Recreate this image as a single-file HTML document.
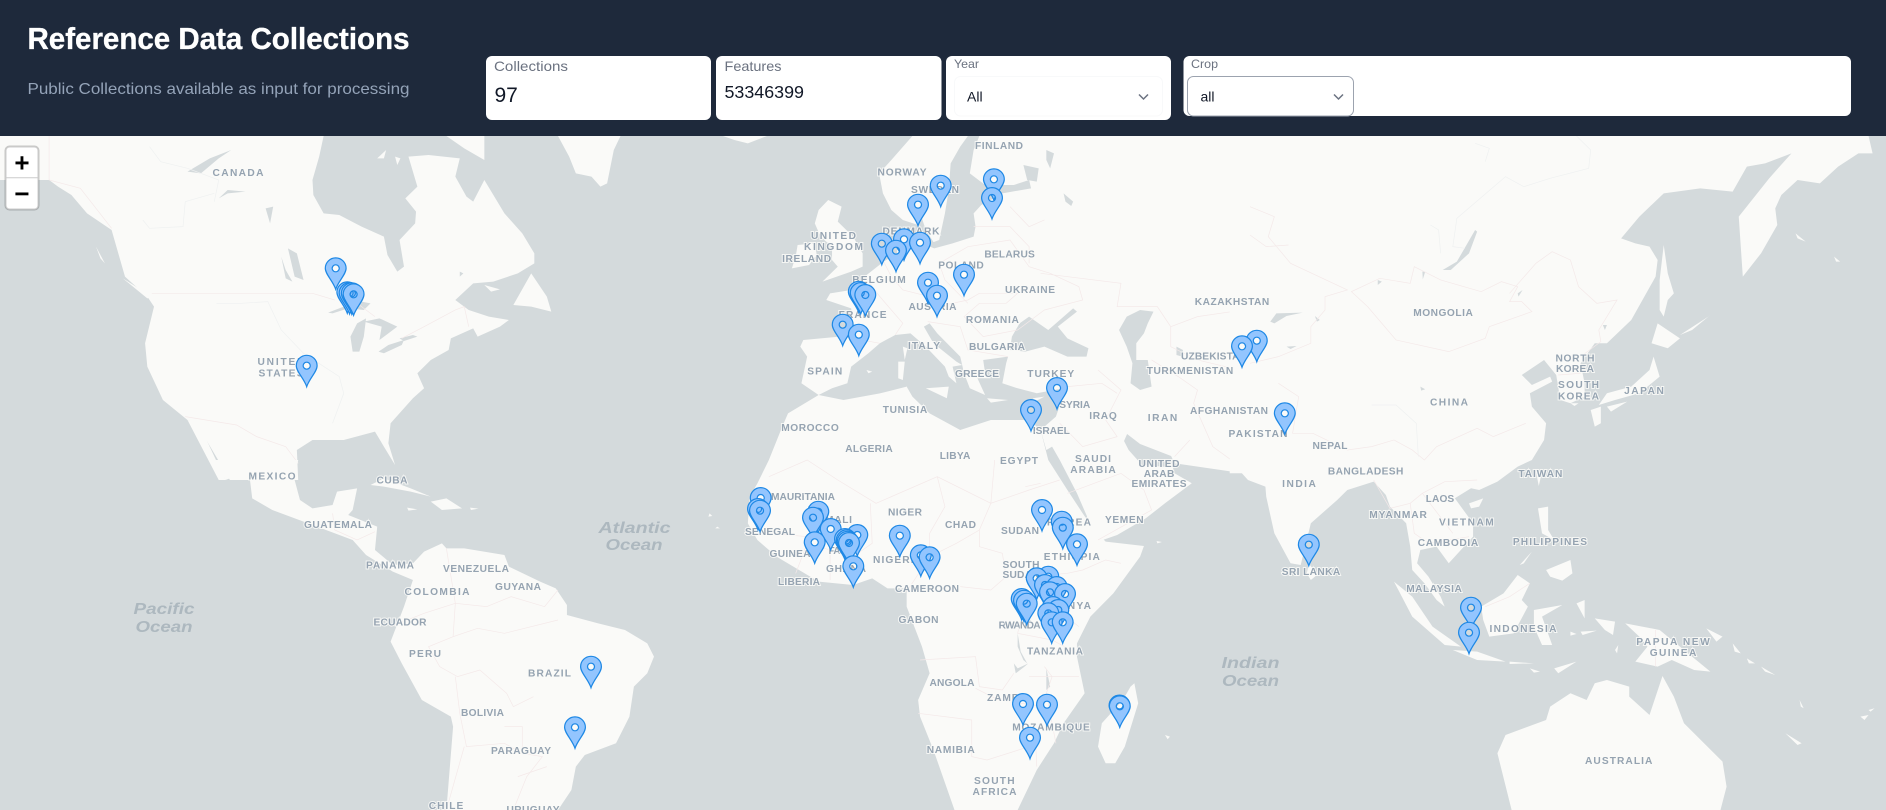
<!DOCTYPE html>
<html lang="en"><head><meta charset="utf-8"><title>Reference Data Collections</title>
<style>
html,body{margin:0;padding:0;width:1886px;height:810px;overflow:hidden;background:#d4dadc}
svg{display:block;font-family:"Liberation Sans",sans-serif}
.land{fill:#fafaf8}.w{fill:#d4dadc}
.b{fill:none;stroke:#f4e9e9;stroke-width:.7;vector-effect:non-scaling-stroke}
.r{fill:none;stroke:#eff1f1;stroke-width:.7;vector-effect:non-scaling-stroke}
.l{font-size:10.2px;fill:#95a3b1;text-anchor:middle;paint-order:stroke;stroke:#fafaf8;stroke-width:2px;stroke-opacity:.85;font-weight:700}
.o{font-size:15.5px;font-style:italic;font-weight:700;fill:#adb8bf;text-anchor:middle}
#p{fill:#93c5fe;stroke:#1e88e5;stroke-width:1.2;fill-rule:evenodd}
</style></head><body>
<svg width="1886" height="810" viewBox="0 0 1886 810" xmlns="http://www.w3.org/2000/svg">
<rect width="1886" height="810" fill="#d4dadc"/>
<defs><path id="p" d="M0 0C-2.5-8-10.4-15-10.4-21A10.4 10.4 0 1 1 10.4-21C10.4-15 2.5-8 0 0ZM0-24.5a3.5 3.5 0 1 0 .01 0Z"/></defs>

<!-- North America -->
<g transform="translate(0 130) scale(.4464 .3333)">
<path class="land" d="M0 18L725 18 715 80 700 150 702 195 725 250 760 255 810 290 860 320 868 375 890 425 905 410 895 330 930 280 932 245 908 205 935 170 915 80 960 75 1030 85 1020 140 1045 200 1060 215 1085 150 1130 250 1170 310 1197 370 1197 400 1160 430 1105 455 1060 460 1020 510 1030 520 1050 540 1095 560 1140 570 1120 590 1070 620 1060 595 1010 625 1005 660 965 690 935 730 950 775 925 805 875 880 870 940 885 1005 860 950 840 905 770 930 700 930 665 960 668 1050 515 1050 440 880 420 870 365 810 330 710 325 640 345 530 330 500 280 440 250 300 195 250 160 195 130 170 110 150 0 150Z"/>
<path class="land" d="M1250 18L1390 18 1375 60 1360 160 1345 170 1325 140 1290 130 1275 80ZM1000 18L1085 18 1085 90 1040 55ZM1150 525L1190 430 1225 500 1235 545 1190 530ZM1085 465L1120 478 1100 485ZM845 85L865 60 860 85ZM885 80L897 85 890 105ZM215 350L235 400 225 385ZM275 445L340 500 330 505ZM420 870L445 880 505 1050 490 1050Z"/>
<path class="w" d="M735 548L770 530 810 515 830 520 815 540 780 535 745 550ZM785 620L800 580 820 565 815 620 805 665 790 665ZM815 575L850 565 890 590 870 610 850 630 855 590ZM848 665L870 645 905 630 900 645 860 670ZM895 625L925 615 935 620 905 633ZM420 125L470 85 518 60 490 85 450 130ZM490 205L510 180 550 185 510 190ZM595 235L612 230 605 280ZM645 355L665 370 680 450 660 440ZM630 380L640 420 655 455 640 445ZM1030 425L1038 430 1030 440Z"/>
<path class="b" d="M340 490L700 490 750 510M110 18L110 150 180 175 250 295M415 860L530 885 575 920 640 950 668 1000M900 625L950 590 1020 540 1040 530 1050 590M790 510L840 560"/>
<path class="r" d="M320 270L335 295 410 290 415 215 480 190M485 520L540 520 600 515 630 600 680 670 760 740 770 790 745 880M335 50L360 95 420 115 490 150 480 215"/>
</g>
<!-- Central and South America -->
<g transform="translate(0 460) scale(.4464 .3333)">
<path class="land" d="M515 0L668 0 660 60 672 120 700 145 745 135 755 95 800 85 790 150 780 165 845 200 840 270 880 315 925 310 950 275 990 250 1000 265 1040 265 1130 285 1140 320 1210 365 1245 385 1270 435 1270 465 1340 490 1400 510 1450 550 1465 590 1450 640 1420 680 1410 770 1380 850 1310 885 1290 920 1280 990 1250 1050 1000 1050 1015 800 1010 770 945 720 900 610 875 545 905 440 925 360 880 335 820 285 790 240 740 215 680 185 610 150 565 115 560 60Z"/>
<path class="land" d="M830 75L860 55 920 85 965 110 920 95 860 80ZM965 125L1000 115 1035 145 990 150ZM480 0L495 0 515 55 505 60ZM912 143L935 148 915 152ZM1053 143L1072 146 1055 150Z"/>
<path class="b" d="M745 160L750 210 800 240M800 240L840 215M1000 265L1020 430 1015 530M1015 530L960 560 985 620 1025 650 1075 630 1135 700 1150 740 1195 710M1020 650L1030 760M1020 430L1090 440 1145 410 1220 440 1250 390M1015 530L1070 505 1130 520 1250 480M1030 760L1045 860 1130 850 1170 880 1215 890 1180 950 1165 1000 1150 1050M1040 860L1000 1050M1130 800L1170 800 1170 880M1160 950L1225 920M875 500L950 460 1020 430"/>
</g>
<!-- Europe, Middle East -->
<g transform="translate(700 130) scale(.3827 .3333)">
<path class="land" d="M555 18L1568 18 1568 1040 1390 1025 1240 1000 1231 978 1150 942 1116 912 1108 933 1120 960 1155 1005 1218 1011 1231 995 1240 1030 1285 1060 1215 1120 1165 1165 1090 1215 1040 1235 985 1090 940 990 920 950 905 960 890 900 930 860 945 810 950 775 880 790 830 775 790 760 800 700 805 680 740 690 745 730 760 745 725 745 745 795 705 775 690 730 680 680 620 610 600 580 585 590 610 640 670 695 685 705 660 710 670 760 650 740 640 710 590 650 550 610 510 615 470 640 440 670 395 710 385 760 345 775 310 795 265 760 280 680 262 650 270 630 365 620 400 590 395 535 330 510 340 490 395 480 430 440 480 395 515 370 515 310 545 292 590 340 615 345 590 300 580 265 570 285 530 270 500 240 478 190 468 130 500 90Z"/>
<path class="land" d="M310 240L335 210 370 230 360 275 400 320 425 370 425 410 395 425 320 455 360 410 345 390 345 350 315 320 300 280ZM255 345L300 340 305 375 285 405 240 415 250 380ZM60 18L175 18 125 40 90 30ZM590 775L650 770 645 805ZM750 805L805 810 760 818ZM870 805L900 800 875 815ZM530 650L542 655 535 690ZM518 695L535 695 530 750 518 745ZM435 720L450 725 440 730Z"/>
<path class="w" d="M810 660L815 620 835 580 860 560 885 580 910 600 930 580 975 535 985 545 935 590 960 625 1015 655 1010 680 960 680 900 650 850 665ZM1095 600L1115 560 1150 540 1185 545 1170 580 1160 610 1140 640 1140 690 1170 690 1180 770 1150 780 1125 760 1130 700 1115 650ZM700 18L730 18 715 60 705 130 745 165 820 165 860 150 865 175 790 190 760 210 735 225 715 250 720 290 715 320 660 340 612 355 590 345 625 330 640 250 650 180 655 100 680 50ZM845 105L885 115 880 155 855 150ZM950 190L975 215 970 228 955 215ZM1245 650L1262 660 1260 680 1245 675ZM1490 585L1510 550 1560 550 1510 560 1500 585ZM905 60L925 70 915 115 905 90Z"/>
<path class="b" d="M365 620L400 625 470 640M510 615L530 580 500 540 470 500 430 440M480 395L500 440 530 480 600 500 620 530 700 510 730 490 830 490 800 520 730 520 690 560 740 620 830 600M595 575L680 590 700 660 805 680M700 520L640 450 625 400 700 350 810 330 860 410 915 430 990 470 1000 510 900 540 830 600M715 290L810 290 860 350 860 400M810 230L860 290 900 270M890 430L1100 460 1090 530 1195 530 1230 590 1300 560 1420 540 1500 440 1568 430M1230 590L1230 650 1300 690 1410 720 1440 690 1530 690M1180 690L1250 740 1300 780 1290 820 1340 950 1400 1000M1280 930L1240 980M1040 720L1100 780 1060 870 1090 920 1000 950 940 880M960 770L1050 760 1090 790M310 795L260 990 180 1020M370 810L355 960 470 1020M540 770L540 860 600 950 620 1020M760 880L770 1020M890 1020L770 1020"/>
</g>
<!-- Africa, Arabia -->
<g transform="translate(700 460) scale(.3827 .3333)">
<path class="land" d="M310 -195L375 -180 470 -200 540 -220 555 -190 600 -140 680 -90 760 -120 860 -120 890 -90 910 0 960 90 1000 160 1030 210 1060 245 1160 258 1150 290 1080 400 1020 470 985 550 985 590 1005 700 950 790 925 850 880 930 830 1050 665 1050 610 870 575 770 570 720 600 640 580 560 540 440 540 385 490 385 450 355 400 375 310 365 200 290 150 240 125 190 130 110 150 70 180 0 215 -100 230 -140Z"/>
<path class="land" d="M1125 680L1135 670 1145 730 1110 860 1085 910 1060 910 1040 860 1050 790 1105 720ZM1215 825L1228 830 1222 838ZM25 160L32 168 22 170ZM45 200L52 205 40 205ZM1193 243L1207 246 1195 250Z"/>
<path class="w" d="M820 610L830 625 858 610 848 620 825 640ZM830 520L838 575 855 610 845 600 830 560ZM905 625L915 680 905 690ZM855 470L880 500 870 505Z"/>
<path class="b" d="M180 50L280 0 360 60 460 130 620 50 760 130 770 0M620 50L640 140 600 220 600 290 670 250 730 210 760 130 860 90 940 60M730 210L730 260 790 280 800 350 760 390 680 380M600 290L540 395M445 130L450 250 400 290 340 270 280 250M340 270L340 360M280 250L250 340M180 220L280 230M800 350L860 350 960 340 1000 330 1060 300 1100 310M860 350L880 400 990 500M850 420L830 520 920 540 985 580M860 650L920 650 990 650M900 620L920 650 905 700 930 850M575 600L720 590 730 680 790 690 820 640M570 760L710 780 710 890 750 900 860 860M720 685L780 720 900 740M875 800L880 920M1040 240L1180 150 1160 90 1100 40 1030 70M850 80L890 70M960 100L1030 70"/>
</g>
<!-- East Asia -->
<g transform="translate(1250 130) scale(.4056 .3333)">
<path class="land" d="M-50 18L1525 18 1535 70 1500 70 1450 110 1405 160 1350 150 1310 195 1295 235 1300 285 1260 370 1215 440 1205 260 1280 145 1335 70 1270 100 1225 110 1190 185 1110 175 1020 190 960 260 915 325 950 340 985 350 1005 390 1000 440 940 570 880 640 850 640 815 700 825 760 825 800 790 820 765 810 755 735 725 690 670 735 695 765 740 740 745 755 690 790 695 830 730 880 725 930 695 990 660 1010 610 1055 565 1080 545 1075 505 1105 550 1180 550 1220 490 1300 460 1250 420 1260 412 1300 440 1340 470 1400 480 1430 460 1410 430 1360 400 1320 395 1250 385 1180 345 1130 335 1095 305 1055 240 1080 215 1110 150 1180 125 1305 100 1300 60 1210 40 1100 38 1070 -5 1050 -20 1030 -50 1030Z"/>
<path class="land" d="M1020 345L1030 430 1045 490 1030 510 1020 560 1010 540 1010 450ZM1005 580L1060 625 1030 655 990 640ZM995 680L1010 740 960 790 900 810 860 825 880 790 940 770 985 720ZM840 840L865 830 865 880 850 890ZM880 830L930 815 890 845ZM1060 615L1130 560 1150 540 1090 600ZM1345 310L1370 335 1350 325ZM1440 380L1455 395 1445 395ZM790 820L810 820 800 828Z"/>
<path class="w" d="M475 420L510 395 555 300 560 305 540 370 495 420ZM50 575L65 550 130 548 90 558 60 580ZM90 650L115 648 100 657ZM160 558L172 570 165 575ZM420 770L432 778 422 782ZM660 490L672 480 662 500ZM870 585L880 585 875 600ZM315 450L325 455 315 465ZM425 425L432 425 426 448Z"/>
<path class="b" d="M290 530L360 630 490 665 580 625 590 590 695 545 670 515 640 515 660 470 620 455 570 485 470 450 405 410 395 460 320 445 250 485 290 530M640 490L705 400 745 365 790 390 810 470 855 520 905 510 860 600 865 635 815 680M0 230L60 260 45 320 100 400 240 480 185 500 185 540 150 590 150 640 70 680 0 700M70 760L120 800 105 910 155 910 240 960 300 950 355 930 400 960 430 990 460 950 560 895 600 920 680 880M0 315L40 350 95 345M760 735L815 730"/>
<path class="r" d="M300 825L360 825 410 880 415 980M445 285L465 300 470 370M555 40L590 55 580 95M805 18L840 60 835 115 740 145 675 170 630 140 510 265 500 350 530 355"/>
</g>
<!-- SE Asia, Oceania -->
<g transform="translate(1250 460) scale(.4056 .3333)">
<path class="land" d="M145 310L165 345 150 360 140 340ZM705 35L720 35 712 78ZM540 130L575 115 565 140 545 145ZM710 145L735 140 735 210 750 240 720 220ZM730 330L790 300 795 340 770 362 740 350ZM665 315L695 275 675 310ZM570 440L625 400 660 345 690 370 670 420 685 440 650 520 590 530 575 480ZM355 365L400 410 450 500 520 560 480 555 400 470ZM500 570L560 575 630 605 560 600ZM700 450L770 435 720 470 745 555 720 555 700 500ZM640 605L700 610 640 612ZM690 625L715 635 700 638ZM750 625L805 605 760 640ZM850 475L900 485 895 525 875 510ZM805 430L825 420 825 475ZM790 515L805 522 790 527ZM815 515L855 512 820 525ZM925 490L1010 510 1090 590 1135 635 1095 630 1040 600 1005 620 950 605 980 560 960 530ZM1125 505L1165 530 1150 545ZM1190 550L1210 580 1195 575ZM1225 595L1245 610 1230 610ZM1260 620L1295 645 1270 635ZM645 1050L610 880 630 825 730 780 740 740 790 700 830 720 850 670 880 660 935 680 935 710 985 765 1017 648 1045 710 1070 790 1165 905 1175 980 1160 1050ZM1320 820L1360 850 1350 855ZM1505 770L1525 765 1515 780ZM1525 750L1540 745 1530 755ZM1355 720L1365 745 1358 740ZM900 570L908 555 905 580Z"/>
<path class="b" d="M305 60L345 145 395 130 425 100 480 65 560 60M395 130L405 220 440 250M425 100L500 220M440 250L540 230M580 440L640 410 690 370M1000 510L1000 620"/>
</g>

<!-- Header -->
<rect width="1886" height="136" fill="#1e293b"/>
<text x="27.5" y="49" font-size="31" font-weight="700" fill="#fff" stroke="#fff" stroke-width=".35" textLength="382" lengthAdjust="spacingAndGlyphs">Reference Data Collections</text>
<text x="27.5" y="94" font-size="16" fill="#94a3b8" textLength="382" lengthAdjust="spacingAndGlyphs">Public Collections available as input for processing</text>
<rect x="486" y="56" width="225" height="64" rx="6" fill="#fff"/>
<rect x="716" y="56" width="225.5" height="64" rx="6" fill="#fff"/>
<rect x="946" y="56" width="225" height="64" rx="6" fill="#fff"/>
<rect x="1183.5" y="56" width="667.5" height="60" rx="6" fill="#fff"/>
<text x="494" y="71" font-size="14" fill="#6b7280" textLength="74" lengthAdjust="spacingAndGlyphs">Collections</text>
<text x="494.5" y="102" font-size="21" fill="#111827">97</text>
<text x="724.5" y="71" font-size="14" fill="#6b7280" textLength="57" lengthAdjust="spacingAndGlyphs">Features</text>
<text x="724.5" y="98" font-size="17.5" fill="#111827" textLength="79.5" lengthAdjust="spacingAndGlyphs">53346399</text>
<text x="954" y="68" font-size="12" fill="#6b7280" textLength="25" lengthAdjust="spacingAndGlyphs">Year</text>
<rect x="954.5" y="76.5" width="208" height="39.5" rx="6" fill="#fff" stroke="#f8f9fa"/>
<text x="967" y="101.5" font-size="14" fill="#111827">All</text>
<path d="M1139 94.5l4.5 4.5 4.5-4.5" fill="none" stroke="#6b7280" stroke-width="1.5"/>
<text x="1191" y="68" font-size="12" fill="#6b7280" textLength="27" lengthAdjust="spacingAndGlyphs">Crop</text>
<rect x="1187.5" y="76.5" width="166" height="39.5" rx="6" fill="#fff" stroke="#9ca3af"/>
<text x="1200.5" y="101.5" font-size="14" fill="#111827">all</text>
<path d="M1334 94.5l4.5 4.5 4.5-4.5" fill="none" stroke="#6b7280" stroke-width="1.5"/>

<!-- Labels -->
<g>
<text class="l" x="238" y="176" textLength="51">CANADA</text>
<text class="l" x="281" y="365" textLength="47">UNITED</text>
<text class="l" x="281" y="376.5" textLength="45">STATES</text>
<text class="l" x="272" y="479.5" textLength="47">MEXICO</text>
<text class="l" x="392" y="483.5" textLength="31">CUBA</text>
<text class="l" x="338" y="528" textLength="68">GUATEMALA</text>
<text class="l" x="390" y="568.5" textLength="48">PANAMA</text>
<text class="l" x="476" y="572" textLength="66">VENEZUELA</text>
<text class="l" x="437" y="595" textLength="65">COLOMBIA</text>
<text class="l" x="518" y="590" textLength="46">GUYANA</text>
<text class="l" x="400" y="625.5" textLength="53">ECUADOR</text>
<text class="l" x="425" y="657" textLength="32">PERU</text>
<text class="l" x="549.5" y="676.5" textLength="43">BRAZIL</text>
<text class="l" x="482.5" y="716" textLength="43">BOLIVIA</text>
<text class="l" x="521" y="754" textLength="60">PARAGUAY</text>
<text class="l" x="446" y="809" textLength="34.5">CHILE</text>
<text class="l" x="533" y="813" textLength="53">URUGUAY</text>
<text class="l" x="999" y="149" textLength="48">FINLAND</text>
<text class="l" x="902" y="175.5" textLength="49">NORWAY</text>
<text class="l" x="935" y="193" textLength="48">SWEDEN</text>
<text class="l" x="911" y="234.5" textLength="57">DENMARK</text>
<text class="l" x="833.5" y="239" textLength="45">UNITED</text>
<text class="l" x="833.5" y="250" textLength="59">KINGDOM</text>
<text class="l" x="806.6" y="262" textLength="49">IRELAND</text>
<text class="l" x="1009.6" y="257.5" textLength="50.5">BELARUS</text>
<text class="l" x="961" y="268.5" textLength="45.5">POLAND</text>
<text class="l" x="879" y="283" textLength="53.5">BELGIUM</text>
<text class="l" x="1030" y="293" textLength="50">UKRAINE</text>
<text class="l" x="1232" y="305" textLength="74.5">KAZAKHSTAN</text>
<text class="l" x="932.5" y="310" textLength="48">AUSTRIA</text>
<text class="l" x="862.6" y="318" textLength="48">FRANCE</text>
<text class="l" x="992.4" y="323" textLength="53">ROMANIA</text>
<text class="l" x="924" y="349" textLength="32">ITALY</text>
<text class="l" x="997" y="350" textLength="56">BULGARIA</text>
<text class="l" x="1214" y="359.5" textLength="66">UZBEKISTAN</text>
<text class="l" x="1190" y="374" textLength="86.5">TURKMENISTAN</text>
<text class="l" x="824.7" y="374.5" textLength="35">SPAIN</text>
<text class="l" x="1050.7" y="377" textLength="47">TURKEY</text>
<text class="l" x="977" y="377" textLength="44">GREECE</text>
<text class="l" x="1074.7" y="408" textLength="31">SYRIA</text>
<text class="l" x="1103" y="419" textLength="27.5">IRAQ</text>
<text class="l" x="1162.5" y="421" textLength="29.5">IRAN</text>
<text class="l" x="1229" y="414" textLength="78">AFGHANISTAN</text>
<text class="l" x="1258" y="437" textLength="59">PAKISTAN</text>
<text class="l" x="905" y="413" textLength="44.5">TUNISIA</text>
<text class="l" x="810" y="431" textLength="57.5">MOROCCO</text>
<text class="l" x="1051.4" y="434" textLength="37">ISRAEL</text>
<text class="l" x="869" y="452" textLength="47.5">ALGERIA</text>
<text class="l" x="955" y="459" textLength="30.6">LIBYA</text>
<text class="l" x="1019" y="464" textLength="38">EGYPT</text>
<text class="l" x="1093" y="462" textLength="36">SAUDI</text>
<text class="l" x="1093" y="473" textLength="45.5">ARABIA</text>
<text class="l" x="1159" y="467" textLength="41">UNITED</text>
<text class="l" x="1159" y="477" textLength="30.6">ARAB</text>
<text class="l" x="1159" y="487" textLength="55">EMIRATES</text>
<text class="l" x="1299" y="487" textLength="33.7">INDIA</text>
<text class="l" x="803" y="500" textLength="64">MAURITANIA</text>
<text class="l" x="838.5" y="523" textLength="27">MALI</text>
<text class="l" x="770" y="535" textLength="50">SENEGAL</text>
<text class="l" x="905" y="515.5" textLength="34">NIGER</text>
<text class="l" x="960.5" y="528" textLength="31">CHAD</text>
<text class="l" x="1020" y="534" textLength="38">SUDAN</text>
<text class="l" x="1065" y="525.5" textLength="52">ERITREA</text>
<text class="l" x="1124.3" y="523" textLength="38.7">YEMEN</text>
<text class="l" x="790" y="557" textLength="41">GUINEA</text>
<text class="l" x="841" y="554" textLength="25">FASO</text>
<text class="l" x="897.5" y="563" textLength="49">NIGERIA</text>
<text class="l" x="846" y="572" textLength="40">GHANA</text>
<text class="l" x="1071.8" y="560" textLength="56">ETHIOPIA</text>
<text class="l" x="1021" y="568" textLength="37">SOUTH</text>
<text class="l" x="1021" y="578" textLength="37">SUDAN</text>
<text class="l" x="799" y="585" textLength="42">LIBERIA</text>
<text class="l" x="927" y="592" textLength="64">CAMEROON</text>
<text class="l" x="1071" y="609" textLength="40">KENYA</text>
<text class="l" x="918.5" y="623" textLength="40">GABON</text>
<text class="l" x="1019.6" y="628.5" textLength="42">RWANDA</text>
<text class="l" x="1055" y="654.5" textLength="56">TANZANIA</text>
<text class="l" x="952" y="686" textLength="45">ANGOLA</text>
<text class="l" x="1009" y="701" textLength="44">ZAMBIA</text>
<text class="l" x="1051" y="730.5" textLength="77.6">MOZAMBIQUE</text>
<text class="l" x="950.7" y="753" textLength="48">NAMIBIA</text>
<text class="l" x="994.3" y="784" textLength="40.5">SOUTH</text>
<text class="l" x="994.5" y="795" textLength="44">AFRICA</text>
<text class="l" x="1443" y="316" textLength="59.6">MONGOLIA</text>
<text class="l" x="1575" y="361.5" textLength="39">NORTH</text>
<text class="l" x="1575" y="372" textLength="38">KOREA</text>
<text class="l" x="1578.5" y="388" textLength="41">SOUTH</text>
<text class="l" x="1578.5" y="399.5" textLength="41">KOREA</text>
<text class="l" x="1644" y="394" textLength="39.8">JAPAN</text>
<text class="l" x="1449" y="405.5" textLength="38">CHINA</text>
<text class="l" x="1330" y="449" textLength="35">NEPAL</text>
<text class="l" x="1365.6" y="474.5" textLength="75.5">BANGLADESH</text>
<text class="l" x="1540.4" y="477" textLength="44">TAIWAN</text>
<text class="l" x="1440" y="502" textLength="28.4">LAOS</text>
<text class="l" x="1398" y="518" textLength="57.6">MYANMAR</text>
<text class="l" x="1466.4" y="525.5" textLength="54.8">VIETNAM</text>
<text class="l" x="1448" y="546" textLength="60.4">CAMBODIA</text>
<text class="l" x="1550" y="545" textLength="74.2">PHILIPPINES</text>
<text class="l" x="1311" y="575" textLength="58.4">SRI LANKA</text>
<text class="l" x="1434" y="592" textLength="55.6">MALAYSIA</text>
<text class="l" x="1523" y="632" textLength="67">INDONESIA</text>
<text class="l" x="1673" y="645" textLength="73.4">PAPUA NEW</text>
<text class="l" x="1673" y="656" textLength="46.6">GUINEA</text>
<text class="l" x="1618.7" y="764" textLength="67.4">AUSTRALIA</text>
<text class="o" x="634.5" y="533" textLength="72" lengthAdjust="spacingAndGlyphs">Atlantic</text>
<text class="o" x="634" y="550" textLength="57" lengthAdjust="spacingAndGlyphs">Ocean</text>
<text class="o" x="164" y="614" textLength="61" lengthAdjust="spacingAndGlyphs">Pacific</text>
<text class="o" x="164" y="632" textLength="57" lengthAdjust="spacingAndGlyphs">Ocean</text>
<text class="o" x="1250.5" y="668" textLength="58" lengthAdjust="spacingAndGlyphs">Indian</text>
<text class="o" x="1250.5" y="686" textLength="57" lengthAdjust="spacingAndGlyphs">Ocean</text>
</g>

<!-- Markers -->
<g>
<use href="#p" x="993.9" y="200.3"/><use href="#p" x="940.7" y="206.7"/><use href="#p" x="992" y="219"/><use href="#p" x="918" y="225.7"/><use href="#p" x="904" y="260.3"/><use href="#p" x="920" y="263.7"/><use href="#p" x="881.8" y="264.7"/><use href="#p" x="896" y="271.7"/><use href="#p" x="335.7" y="289.3"/><use href="#p" x="964" y="295.7"/><use href="#p" x="928" y="303.7"/><use href="#p" x="858.8" y="312.7"/><use href="#p" x="347.3" y="313.3"/><use href="#p" x="349.6" y="314"/><use href="#p" x="860.7" y="314"/><use href="#p" x="351.8" y="314.3"/><use href="#p" x="353.6" y="315.3"/><use href="#p" x="865.3" y="316"/><use href="#p" x="937" y="316.7"/><use href="#p" x="842.7" y="345.7"/><use href="#p" x="858.8" y="355.7"/><use href="#p" x="1256.8" y="361.7"/><use href="#p" x="1242" y="367.3"/><use href="#p" x="306.7" y="386.7"/><use href="#p" x="1057" y="409"/><use href="#p" x="1031" y="431"/><use href="#p" x="1284.8" y="434.3"/><use href="#p" x="760.7" y="519"/><use href="#p" x="758" y="530"/><use href="#p" x="1042" y="531"/><use href="#p" x="760" y="531.7"/><use href="#p" x="818.3" y="532.7"/><use href="#p" x="813" y="538.7"/><use href="#p" x="1061.7" y="542.7"/><use href="#p" x="1062.8" y="548.7"/><use href="#p" x="830.7" y="550"/><use href="#p" x="857.3" y="556"/><use href="#p" x="899.8" y="556.7"/><use href="#p" x="845" y="560"/><use href="#p" x="846.7" y="561.3"/><use href="#p" x="847.7" y="562.7"/><use href="#p" x="814.7" y="563.3"/><use href="#p" x="849" y="564"/><use href="#p" x="1077" y="565.3"/><use href="#p" x="1308.8" y="565.7"/><use href="#p" x="920.8" y="576.3"/><use href="#p" x="929.6" y="578.3"/><use href="#p" x="853.3" y="587.3"/><use href="#p" x="1048.3" y="597.7"/><use href="#p" x="1036.7" y="599.3"/><use href="#p" x="1045" y="606"/><use href="#p" x="1056.7" y="608"/><use href="#p" x="1050" y="613.3"/><use href="#p" x="1065" y="615"/><use href="#p" x="1021.7" y="620"/><use href="#p" x="1024" y="621.7"/><use href="#p" x="1026.7" y="624.7"/><use href="#p" x="1053" y="628"/><use href="#p" x="1471" y="628.7"/><use href="#p" x="1058.3" y="631"/><use href="#p" x="1048.3" y="634.3"/><use href="#p" x="1051.7" y="643.3"/><use href="#p" x="1062.7" y="643.3"/><use href="#p" x="1469" y="653.7"/><use href="#p" x="591" y="687.7"/><use href="#p" x="1023" y="725"/><use href="#p" x="1047" y="725.7"/><use href="#p" x="1119.5" y="726.5"/><use href="#p" x="1119.8" y="727.3"/><use href="#p" x="575" y="748.3"/><use href="#p" x="1030" y="758.7"/>
</g>

<!-- Zoom control -->
<rect x="5.5" y="146.5" width="33" height="63" rx="4" fill="#fff" stroke="#000" stroke-opacity=".2" stroke-width="2"/>
<line x1="6.5" x2="37.5" y1="177.7" y2="177.7" stroke="#ccc"/>
<text x="22" y="171.5" font-size="26" font-weight="700" text-anchor="middle" fill="#000">+</text>
<text x="22" y="202.5" font-size="26" font-weight="700" text-anchor="middle" fill="#000">−</text>
</svg>
</body></html>
